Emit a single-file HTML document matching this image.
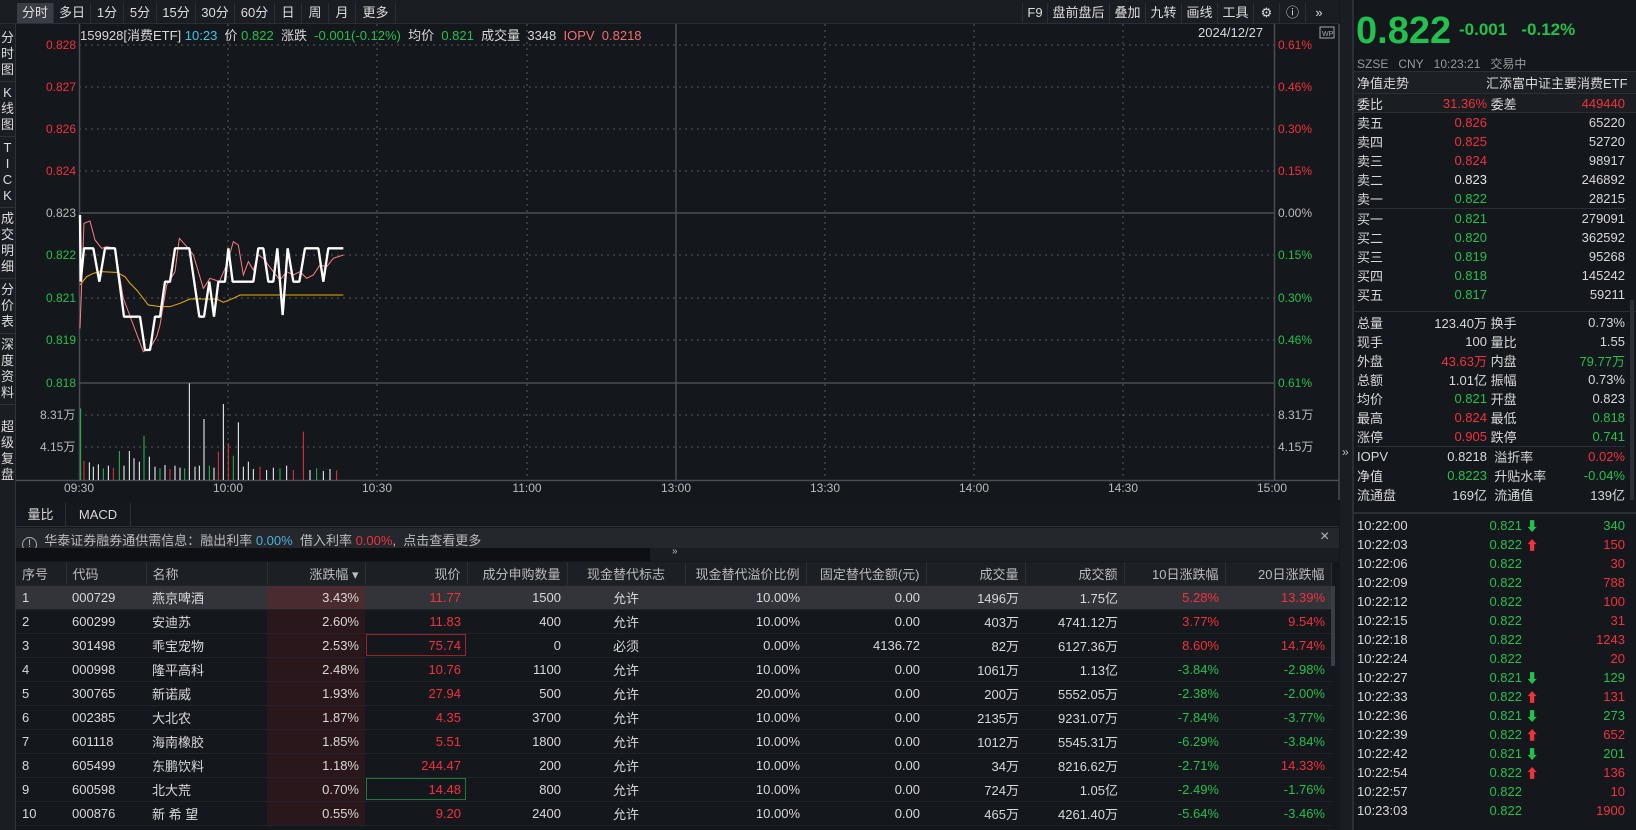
<!DOCTYPE html>
<html><head><meta charset="utf-8">
<style>
*{margin:0;padding:0;box-sizing:border-box}
body{width:1636px;height:830px;overflow:hidden;background:#14171c;color:#d8d8d8;font-family:"Liberation Sans","Noto Sans CJK SC",sans-serif;font-size:13px;position:relative}
.a{position:absolute;white-space:nowrap}
.g{color:#22c04c}.r{color:#f0323c}.w{color:#e6e6e6}.c{color:#3ac8e6}.gr{color:#9a9a9a}
.top{left:0;top:0;width:1339px;height:24px;background:#1a1d22;border-bottom:1px solid #2b2e34}
.tab{position:absolute;top:3px;height:20px;line-height:20px;text-align:center;font-size:13px;color:#ddd;border-right:1px solid #2b2e34}
.vs{left:0;top:24px;width:16px;height:806px;background:#1a1d22;border-right:1px solid #2f3238;font-size:13px;line-height:16px;text-align:center;color:#ddd}
.vs div{border-bottom:1px solid #2f3238;padding:3px 0}
.ax{font-size:12px}
table{border-collapse:collapse;table-layout:fixed}
td{height:24px;padding:0 6px;font-size:13px;border-bottom:1px solid #20242a;white-space:nowrap;overflow:hidden}
.hd td{height:23px;background:#1c1f24;color:#bbb;border-right:1px solid #2b2e34}
.rt{text-align:right}.ct{text-align:center}
.rp td{height:19px;padding:0;font-size:13px;border:none}
</style></head><body>
<div class="a top"></div>
<div class="tab" style="left:17px;width:37px;background:#3a3d44">分时</div>
<div class="tab" style="left:54px;width:37px">多日</div>
<div class="tab" style="left:91px;width:33px">1分</div>
<div class="tab" style="left:124px;width:33px">5分</div>
<div class="tab" style="left:157px;width:39px">15分</div>
<div class="tab" style="left:196px;width:39px">30分</div>
<div class="tab" style="left:235px;width:40px">60分</div>
<div class="tab" style="left:275px;width:27px">日</div>
<div class="tab" style="left:302px;width:27px">周</div>
<div class="tab" style="left:329px;width:27px">月</div>
<div class="tab" style="left:356px;width:40px">更多</div>
<div class="tab" style="left:1022px;width:26px;border-left:1px solid #2b2e34">F9</div>
<div class="tab" style="left:1048px;width:62px">盘前盘后</div>
<div class="tab" style="left:1110px;width:36px">叠加</div>
<div class="tab" style="left:1146px;width:36px">九转</div>
<div class="tab" style="left:1182px;width:36px">画线</div>
<div class="tab" style="left:1218px;width:36px">工具</div>
<div class="tab" style="left:1254px;width:26px">⚙</div>
<div class="tab" style="left:1280px;width:26px">ⓘ</div>
<div class="tab" style="left:1306px;width:26px;border:none">»</div>

<div class="a vs">
<div style="padding-top:6px">分<br>时<br>图</div>
<div>K<br>线<br>图</div>
<div>T<br>I<br>C<br>K</div>
<div>成<br>交<br>明<br>细</div>
<div>分<br>价<br>表</div>
<div>深<br>度<br>资<br>料</div>
<div style="border:none;padding-top:14px">超<br>级<br>复<br>盘</div>
</div>

<!-- chart -->
<svg class="a" style="left:0;top:0" width="1340" height="500">
<g stroke="#555a62" stroke-dasharray="2,4" stroke-width="1">
<line x1="79" y1="45" x2="1274" y2="45"/><line x1="79" y1="87" x2="1274" y2="87"/><line x1="79" y1="129" x2="1274" y2="129"/><line x1="79" y1="171" x2="1274" y2="171"/>
<line x1="79" y1="255" x2="1274" y2="255"/><line x1="79" y1="298" x2="1274" y2="298"/><line x1="79" y1="340" x2="1274" y2="340"/>
<line x1="79" y1="415" x2="1274" y2="415"/><line x1="79" y1="447" x2="1274" y2="447"/>
<line x1="228" y1="24" x2="228" y2="480"/><line x1="377" y1="24" x2="377" y2="480"/><line x1="527" y1="24" x2="527" y2="480"/><line x1="825" y1="24" x2="825" y2="480"/><line x1="974" y1="24" x2="974" y2="480"/><line x1="1123" y1="24" x2="1123" y2="480"/>
</g>
<g stroke="#4a4e55" stroke-width="1.5">
<line x1="79" y1="213" x2="1274" y2="213"/><line x1="79" y1="383" x2="1274" y2="383"/><line x1="676" y1="24" x2="676" y2="480"/>
<line x1="79.5" y1="24" x2="79.5" y2="480"/><line x1="1274.5" y1="24" x2="1274.5" y2="480"/><line x1="16" y1="480.5" x2="1339" y2="480.5"/><line x1="1339" y1="24" x2="1339" y2="830"/>
</g>
<g transform="translate(60,195) scale(0.33333)" fill="none">
<g stroke-width="3">
<line x1="62" y1="855" x2="62" y2="640" stroke="#22c04c"/><line x1="72" y1="855" x2="72" y2="798" stroke="#f0323c"/><line x1="88" y1="855" x2="88" y2="802" stroke="#fff"/>
<line x1="100" y1="855" x2="100" y2="815" stroke="#fff"/><line x1="115" y1="855" x2="115" y2="808" stroke="#fff"/><line x1="130" y1="855" x2="130" y2="820" stroke="#22c04c"/><line x1="145" y1="855" x2="145" y2="812" stroke="#fff"/><line x1="160" y1="855" x2="160" y2="818" stroke="#f0323c"/>
<line x1="178" y1="855" x2="178" y2="768" stroke="#22c04c"/><line x1="192" y1="855" x2="192" y2="812" stroke="#fff"/><line x1="208" y1="855" x2="208" y2="768" stroke="#fff"/><line x1="222" y1="855" x2="222" y2="790" stroke="#fff"/><line x1="238" y1="855" x2="238" y2="800" stroke="#fff"/><line x1="252" y1="855" x2="252" y2="722" stroke="#22c04c"/><line x1="268" y1="855" x2="268" y2="785" stroke="#fff"/>
<line x1="285" y1="855" x2="285" y2="815" stroke="#fff"/><line x1="300" y1="855" x2="300" y2="820" stroke="#22c04c"/><line x1="315" y1="855" x2="315" y2="810" stroke="#fff"/><line x1="330" y1="855" x2="330" y2="822" stroke="#f0323c"/><line x1="345" y1="855" x2="345" y2="812" stroke="#fff"/><line x1="360" y1="855" x2="360" y2="818" stroke="#fff"/><line x1="374" y1="855" x2="374" y2="820" stroke="#22c04c"/>
<line x1="388" y1="855" x2="388" y2="565" stroke="#fff"/><line x1="405" y1="855" x2="405" y2="815" stroke="#fff"/><line x1="418" y1="855" x2="418" y2="812" stroke="#fff"/><line x1="432" y1="855" x2="432" y2="672" stroke="#fff"/><line x1="448" y1="855" x2="448" y2="812" stroke="#22c04c"/><line x1="462" y1="855" x2="462" y2="818" stroke="#fff"/><line x1="475" y1="855" x2="475" y2="770" stroke="#f0323c"/>
<line x1="490" y1="855" x2="490" y2="627" stroke="#fff"/><line x1="505" y1="855" x2="505" y2="745" stroke="#f0323c"/><line x1="520" y1="855" x2="520" y2="782" stroke="#22c04c"/><line x1="535" y1="855" x2="535" y2="682" stroke="#fff"/><line x1="550" y1="855" x2="550" y2="815" stroke="#fff"/><line x1="565" y1="855" x2="565" y2="800" stroke="#fff"/>
<line x1="580" y1="855" x2="580" y2="822" stroke="#fff"/><line x1="600" y1="855" x2="600" y2="815" stroke="#f0323c"/><line x1="620" y1="855" x2="620" y2="825" stroke="#fff"/><line x1="640" y1="855" x2="640" y2="818" stroke="#fff"/><line x1="660" y1="855" x2="660" y2="820" stroke="#22c04c"/><line x1="680" y1="855" x2="680" y2="812" stroke="#fff"/><line x1="700" y1="855" x2="700" y2="825" stroke="#f0323c"/>
<line x1="730" y1="855" x2="730" y2="710" stroke="#f0323c"/><line x1="750" y1="855" x2="750" y2="825" stroke="#fff"/><line x1="770" y1="855" x2="770" y2="820" stroke="#22c04c"/><line x1="790" y1="855" x2="790" y2="828" stroke="#fff"/><line x1="810" y1="855" x2="810" y2="822" stroke="#fff"/><line x1="830" y1="855" x2="830" y2="826" stroke="#f0323c"/>
</g>
<polyline stroke="#f2b100" stroke-width="3" points="60,270 80,245 100,235 120,230 170,232 195,245 210,265 230,285 265,330 300,335 330,335 360,325 390,312 470,312 490,322 520,310 540,300 850,300"/>
<polyline stroke="#ff7f7f" stroke-width="3" points="60,400 72,85 90,78 105,135 125,160 140,155 165,160 190,310 250,470 270,460 290,425 300,390 320,270 345,230 358,130 385,160 400,180 430,280 450,250 465,255 478,260 500,210 520,140 535,150 550,240 565,200 580,225 595,180 610,190 640,230 660,255 680,230 700,240 720,230 740,250 760,240 780,210 800,215 820,190 850,180"/>
<polyline stroke="#fff" stroke-width="7" stroke-linejoin="bevel" points="60,60 62,260 72,160 100,160 118,260 135,160 165,160 192,365 240,365 255,465 270,465 285,365 300,365 315,260 330,260 345,160 388,160 418,365 432,365 448,260 462,365 475,260 495,260 505,160 518,260 580,260 595,160 610,160 625,260 640,260 652,160 668,360 683,160 700,260 718,260 735,160 775,160 790,260 805,160 850,160"/>
</g>
<g class="ax" font-size="12" font-family="Liberation Sans">
<g text-anchor="end"><text x="76" y="49" fill="#f0323c">0.828</text><text x="76" y="91" fill="#f0323c">0.827</text><text x="76" y="133" fill="#f0323c">0.826</text><text x="76" y="175" fill="#f0323c">0.824</text><text x="76" y="217" fill="#bbb">0.823</text><text x="76" y="259" fill="#22c04c">0.822</text><text x="76" y="302" fill="#22c04c">0.821</text><text x="76" y="344" fill="#22c04c">0.819</text><text x="76" y="387" fill="#22c04c">0.818</text></g>
<text x="40" y="419" fill="#bbb" font-family="Liberation Sans,Noto Sans CJK SC">8.31万</text><text x="40" y="451" fill="#bbb" font-family="Liberation Sans,Noto Sans CJK SC">4.15万</text>
<text x="1278" y="49" fill="#f0323c">0.61%</text><text x="1278" y="91" fill="#f0323c">0.46%</text><text x="1278" y="133" fill="#f0323c">0.30%</text><text x="1278" y="175" fill="#f0323c">0.15%</text><text x="1278" y="217" fill="#bbb">0.00%</text><text x="1278" y="259" fill="#22c04c">0.15%</text><text x="1278" y="302" fill="#22c04c">0.30%</text><text x="1278" y="344" fill="#22c04c">0.46%</text><text x="1278" y="387" fill="#22c04c">0.61%</text>
<text x="1278" y="419" fill="#bbb" font-family="Liberation Sans,Noto Sans CJK SC">8.31万</text><text x="1278" y="451" fill="#bbb" font-family="Liberation Sans,Noto Sans CJK SC">4.15万</text>
<g fill="#bbb" text-anchor="middle"><text x="79" y="492">09:30</text><text x="228" y="492">10:00</text><text x="377" y="492">10:30</text><text x="527" y="492">11:00</text><text x="676" y="492">13:00</text><text x="825" y="492">13:30</text><text x="974" y="492">14:00</text><text x="1123" y="492">14:30</text><text x="1272" y="492">15:00</text></g>
</g>
<rect x="1320" y="27" width="14" height="11" fill="none" stroke="#aaa"/><text x="1322" y="36" font-size="7" fill="#aaa">WP</text>
</svg>
<div class="a" style="left:80px;top:25px;font-size:13px">159928[消费ETF] <span class="c">10:23</span>&nbsp; 价 <span class="g">0.822</span>&nbsp; 涨跌&nbsp; <span class="g">-0.001(-0.12%)</span>&nbsp; 均价&nbsp; <span class="g">0.821</span>&nbsp; 成交量&nbsp; 3348&nbsp; <span style="color:#f07070">IOPV&nbsp; 0.8218</span></div>
<div class="a" style="left:1198px;top:25px">2024/12/27</div>

<!-- tabs -->
<div class="a" style="left:16px;top:503px;width:1323px;height:24px;background:#15181d;border-bottom:1px solid #2b2e34"></div>
<div class="a" style="left:16px;top:503px;width:50px;height:24px;line-height:24px;text-align:center;border-right:1px solid #2b2e34">量比</div>
<div class="a" style="left:66px;top:503px;width:65px;height:24px;line-height:24px;text-align:center;border-right:1px solid #2b2e34">MACD</div>
<div class="a" style="left:16px;top:528px;width:1323px;height:20px;background:#24272c"></div>
<div class="a" style="left:22px;top:530px;font-size:13px;color:#bbb"><span style="display:inline-block;width:15px;height:15px;border:1px solid #aaa;border-radius:50%;text-align:center;line-height:13px;font-size:11px;vertical-align:-2px">!</span>&nbsp; 华泰证券融券通供需信息：融出利率 <span style="color:#4ab0e0">0.00%</span>&nbsp; 借入利率 <span class="r">0.00%</span>,&nbsp; 点击查看更多</div>
<div class="a" style="left:1320px;top:528px;color:#bbb;font-size:16px">×</div>
<div class="a" style="left:16px;top:548px;width:1323px;height:13px;background:#0e1014"></div>
<div class="a" style="left:650px;top:548px;width:689px;height:13px;background:#1a1d22"></div>
<div class="a" style="left:672px;top:546px;font-size:10px;color:#bbb">»</div>

<!-- table -->
<table class="a" style="left:16px;top:562px;width:1315px">
<colgroup><col style="width:50px"><col style="width:80px"><col style="width:121px"><col style="width:98px"><col style="width:102px"><col style="width:100px"><col style="width:118px"><col style="width:121px"><col style="width:120px"><col style="width:99px"><col style="width:99px"><col style="width:101px"><col style="width:106px"></colgroup>
<tr class="hd"><td>序号</td><td>代码</td><td>名称</td><td class="rt">涨跌幅 ▾</td><td class="rt">现价</td><td class="rt">成分申购数量</td><td class="ct">现金替代标志</td><td class="rt">现金替代溢价比例</td><td class="rt">固定替代金额(元)</td><td class="rt">成交量</td><td class="rt">成交额</td><td class="rt">10日涨跌幅</td><td class="rt">20日涨跌幅</td></tr>
<tr style="background:#323439"><td>1</td><td>000729</td><td>燕京啤酒</td><td class="rt" style="background:#4a2b30">3.43%</td><td class="rt r">11.77</td><td class="rt">1500</td><td class="ct">允许</td><td class="rt">10.00%</td><td class="rt">0.00</td><td class="rt">1496万</td><td class="rt">1.75亿</td><td class="rt r">5.28%</td><td class="rt r">13.39%</td></tr>
<tr><td>2</td><td>600299</td><td>安迪苏</td><td class="rt" style="background:#2a171b">2.60%</td><td class="rt r">11.83</td><td class="rt">400</td><td class="ct">允许</td><td class="rt">10.00%</td><td class="rt">0.00</td><td class="rt">403万</td><td class="rt">4741.12万</td><td class="rt r">3.77%</td><td class="rt r">9.54%</td></tr>
<tr><td>3</td><td>301498</td><td>乖宝宠物</td><td class="rt" style="background:#2a171b">2.53%</td><td class="rt r" style="outline:1px solid #a02028;outline-offset:-2px">75.74</td><td class="rt">0</td><td class="ct">必须</td><td class="rt">0.00%</td><td class="rt">4136.72</td><td class="rt">82万</td><td class="rt">6127.36万</td><td class="rt r">8.60%</td><td class="rt r">14.74%</td></tr>
<tr><td>4</td><td>000998</td><td>隆平高科</td><td class="rt" style="background:#2a171b">2.48%</td><td class="rt r">10.76</td><td class="rt">1100</td><td class="ct">允许</td><td class="rt">10.00%</td><td class="rt">0.00</td><td class="rt">1061万</td><td class="rt">1.13亿</td><td class="rt g">-3.84%</td><td class="rt g">-2.98%</td></tr>
<tr><td>5</td><td>300765</td><td>新诺威</td><td class="rt" style="background:#2a171b">1.93%</td><td class="rt r">27.94</td><td class="rt">500</td><td class="ct">允许</td><td class="rt">20.00%</td><td class="rt">0.00</td><td class="rt">200万</td><td class="rt">5552.05万</td><td class="rt g">-2.38%</td><td class="rt g">-2.00%</td></tr>
<tr><td>6</td><td>002385</td><td>大北农</td><td class="rt" style="background:#2a171b">1.87%</td><td class="rt r">4.35</td><td class="rt">3700</td><td class="ct">允许</td><td class="rt">10.00%</td><td class="rt">0.00</td><td class="rt">2135万</td><td class="rt">9231.07万</td><td class="rt g">-7.84%</td><td class="rt g">-3.77%</td></tr>
<tr><td>7</td><td>601118</td><td>海南橡胶</td><td class="rt" style="background:#2a171b">1.85%</td><td class="rt r">5.51</td><td class="rt">1800</td><td class="ct">允许</td><td class="rt">10.00%</td><td class="rt">0.00</td><td class="rt">1012万</td><td class="rt">5545.31万</td><td class="rt g">-6.29%</td><td class="rt g">-3.84%</td></tr>
<tr><td>8</td><td>605499</td><td>东鹏饮料</td><td class="rt" style="background:#2a171b">1.18%</td><td class="rt r">244.47</td><td class="rt">200</td><td class="ct">允许</td><td class="rt">10.00%</td><td class="rt">0.00</td><td class="rt">34万</td><td class="rt">8216.62万</td><td class="rt g">-2.71%</td><td class="rt r">14.33%</td></tr>
<tr><td>9</td><td>600598</td><td>北大荒</td><td class="rt" style="background:#2a171b">0.70%</td><td class="rt r" style="outline:1px solid #1e7a38;outline-offset:-2px">14.48</td><td class="rt">800</td><td class="ct">允许</td><td class="rt">10.00%</td><td class="rt">0.00</td><td class="rt">724万</td><td class="rt">1.05亿</td><td class="rt g">-2.49%</td><td class="rt g">-1.76%</td></tr>
<tr><td>10</td><td>000876</td><td>新 希 望</td><td class="rt" style="background:#2a171b">0.55%</td><td class="rt r">9.20</td><td class="rt">2400</td><td class="ct">允许</td><td class="rt">10.00%</td><td class="rt">0.00</td><td class="rt">465万</td><td class="rt">4261.40万</td><td class="rt g">-5.64%</td><td class="rt g">-3.46%</td></tr>
</table>
<div class="a" style="left:1331px;top:586px;width:4px;height:80px;background:#3a3d44"></div>

<!-- right panel -->
<div class="a" style="left:1340px;top:0;width:12px;height:830px;background:#1a1d22"></div>
<div class="a" style="left:1342px;top:445px;color:#bbb;font-size:12px">»</div>
<div class="a" style="left:1352px;top:0;width:2px;height:830px;background:#2b2e34"></div>
<div class="a g" style="left:1356px;top:10px;font-size:38px;font-weight:bold">0.822</div>
<div class="a g" style="left:1459px;top:20px;font-size:17px;font-weight:bold">-0.001&nbsp;&nbsp; -0.12%</div>
<div class="a gr" style="left:1357px;top:55px;font-size:12px">SZSE&nbsp;&nbsp; CNY&nbsp;&nbsp; 10:23:21&nbsp;&nbsp; 交易中</div>
<div class="a" style="left:1354px;top:71px;width:282px;height:22px;background:#1c1f24;border-top:1px solid #2b2e34"></div>
<div class="a" style="left:1357px;top:73px">净值走势</div>
<div class="a" style="left:1486px;top:73px">汇添富中证主要消费ETF</div>
<div class="a" style="left:1354px;top:93px;width:282px;height:20px;background:#1a1d22;border-top:1px solid #2b2e34;border-bottom:1px solid #2b2e34"></div>

<table class="a rp" style="left:1357px;top:94px;width:268px">
<colgroup><col style="width:50px"><col style="width:80px"><col style="width:50px"><col></colgroup>
<tr><td>委比</td><td class="rt r">31.36%</td><td>&nbsp;委差</td><td class="rt r">449440</td></tr>
<tr><td>卖五</td><td class="rt r">0.826</td><td></td><td class="rt">65220</td></tr>
<tr><td>卖四</td><td class="rt r">0.825</td><td></td><td class="rt">52720</td></tr>
<tr><td>卖三</td><td class="rt r">0.824</td><td></td><td class="rt">98917</td></tr>
<tr><td>卖二</td><td class="rt w">0.823</td><td></td><td class="rt">246892</td></tr>
<tr><td>卖一</td><td class="rt g">0.822</td><td></td><td class="rt">28215</td></tr>
<tr><td style="border-top:1px solid #2b2e34">买一</td><td class="rt g" style="border-top:1px solid #2b2e34">0.821</td><td style="border-top:1px solid #2b2e34"></td><td class="rt" style="border-top:1px solid #2b2e34">279091</td></tr>
<tr><td>买二</td><td class="rt g">0.820</td><td></td><td class="rt">362592</td></tr>
<tr><td>买三</td><td class="rt g">0.819</td><td></td><td class="rt">95268</td></tr>
<tr><td>买四</td><td class="rt g">0.818</td><td></td><td class="rt">145242</td></tr>
<tr><td>买五</td><td class="rt g">0.817</td><td></td><td class="rt">59211</td></tr>
</table>
<div class="a" style="left:1354px;top:311px;width:282px;height:1px;background:#2b2e34"></div>
<table class="a rp" style="left:1357px;top:313px;width:268px">
<colgroup><col style="width:50px"><col style="width:80px"><col style="width:50px"><col></colgroup>
<tr><td>总量</td><td class="rt">123.40万</td><td>&nbsp;换手</td><td class="rt">0.73%</td></tr>
<tr><td>现手</td><td class="rt">100</td><td>&nbsp;量比</td><td class="rt">1.55</td></tr>
<tr><td>外盘</td><td class="rt r">43.63万</td><td>&nbsp;内盘</td><td class="rt g">79.77万</td></tr>
<tr><td>总额</td><td class="rt">1.01亿</td><td>&nbsp;振幅</td><td class="rt">0.73%</td></tr>
<tr><td>均价</td><td class="rt g">0.821</td><td>&nbsp;开盘</td><td class="rt">0.823</td></tr>
<tr><td>最高</td><td class="rt r">0.824</td><td>&nbsp;最低</td><td class="rt g">0.818</td></tr>
<tr><td>涨停</td><td class="rt r">0.905</td><td>&nbsp;跌停</td><td class="rt g">0.741</td></tr>
<tr><td style="border-top:1px solid #2b2e34">IOPV</td><td class="rt" style="border-top:1px solid #2b2e34">0.8218</td><td style="border-top:1px solid #2b2e34">&nbsp;&nbsp;溢折率</td><td class="rt r" style="border-top:1px solid #2b2e34">0.02%</td></tr>
<tr><td>净值</td><td class="rt g">0.8223</td><td style="overflow:visible">&nbsp;&nbsp;升贴水率</td><td class="rt g">-0.04%</td></tr>
<tr><td>流通盘</td><td class="rt">169亿</td><td>&nbsp;&nbsp;流通值</td><td class="rt">139亿</td></tr>
</table>
<div class="a" style="left:1354px;top:512px;width:282px;height:2px;background:#2b2e34"></div>
<table class="a rp" style="left:1357px;top:516px;width:268px">
<colgroup><col style="width:90px"><col style="width:75px"><col style="width:20px"><col></colgroup>
<tr><td>10:22:00</td><td class="rt g">0.821</td><td class="g">&nbsp;⬇</td><td class="rt g">340</td></tr>
<tr><td>10:22:03</td><td class="rt g">0.822</td><td class="r">&nbsp;⬆</td><td class="rt r">150</td></tr>
<tr><td>10:22:06</td><td class="rt g">0.822</td><td></td><td class="rt r">30</td></tr>
<tr><td>10:22:09</td><td class="rt g">0.822</td><td></td><td class="rt r">788</td></tr>
<tr><td>10:22:12</td><td class="rt g">0.822</td><td></td><td class="rt r">100</td></tr>
<tr><td>10:22:15</td><td class="rt g">0.822</td><td></td><td class="rt r">31</td></tr>
<tr><td>10:22:18</td><td class="rt g">0.822</td><td></td><td class="rt r">1243</td></tr>
<tr><td>10:22:24</td><td class="rt g">0.822</td><td></td><td class="rt r">20</td></tr>
<tr><td>10:22:27</td><td class="rt g">0.821</td><td class="g">&nbsp;⬇</td><td class="rt g">129</td></tr>
<tr><td>10:22:33</td><td class="rt g">0.822</td><td class="r">&nbsp;⬆</td><td class="rt r">131</td></tr>
<tr><td>10:22:36</td><td class="rt g">0.821</td><td class="g">&nbsp;⬇</td><td class="rt g">273</td></tr>
<tr><td>10:22:39</td><td class="rt g">0.822</td><td class="r">&nbsp;⬆</td><td class="rt r">652</td></tr>
<tr><td>10:22:42</td><td class="rt g">0.821</td><td class="g">&nbsp;⬇</td><td class="rt g">201</td></tr>
<tr><td>10:22:54</td><td class="rt g">0.822</td><td class="r">&nbsp;⬆</td><td class="rt r">136</td></tr>
<tr><td>10:22:57</td><td class="rt g">0.822</td><td></td><td class="rt r">10</td></tr>
<tr><td>10:23:03</td><td class="rt g">0.822</td><td></td><td class="rt r">1900</td></tr>
</table>
<div class="a" style="left:1630px;top:300px;width:4px;height:200px;background:#2b2e34"></div>
</body></html>
